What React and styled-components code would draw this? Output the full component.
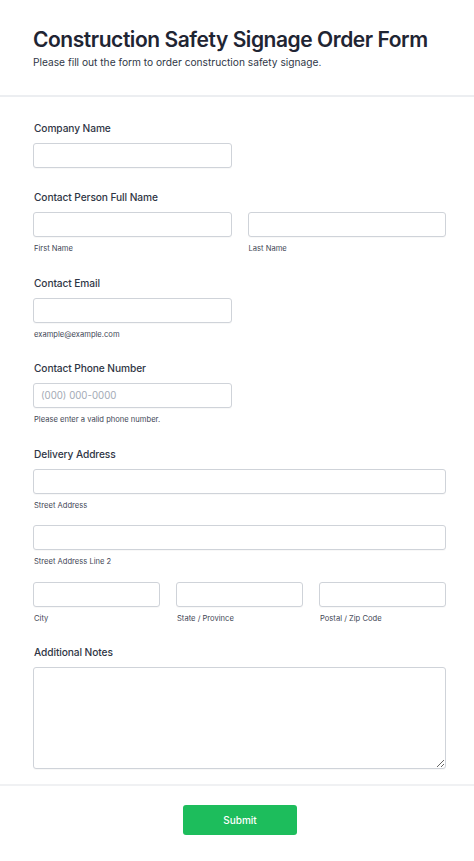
import React from 'react';
import styled, { createGlobalStyle } from 'styled-components';

const GlobalStyle = createGlobalStyle`
  * { box-sizing: border-box; }
  body {
    margin: 0;
    background: #fff;
    font-family: Inter, "Noto Sans", Arial, sans-serif;
    color: #1f2937;
  }
`;

const App = () => {
  return (
    <Page>
      <GlobalStyle />
      <Header>
        <Title>Construction Safety Signage Order Form</Title>
        <Subtitle>Please fill out the form to order construction safety signage.</Subtitle>
      </Header>

      <FormBody>
        <Field>
          <Label>Company Name</Label>
          <Row cols={2}>
            <Input type="text" />
          </Row>
        </Field>

        <Field hasSub>
          <Label>Contact Person Full Name</Label>
          <Row cols={2}>
            <Cell>
              <Input type="text" />
              <SubLabel>First Name</SubLabel>
            </Cell>
            <Cell>
              <Input type="text" />
              <SubLabel>Last Name</SubLabel>
            </Cell>
          </Row>
        </Field>

        <Field hasSub>
          <Label>Contact Email</Label>
          <Row cols={2}>
            <Cell>
              <Input type="email" />
              <SubLabel>example@example.com</SubLabel>
            </Cell>
          </Row>
        </Field>

        <Field hasSub>
          <Label>Contact Phone Number</Label>
          <Row cols={2}>
            <Cell>
              <Input type="tel" placeholder="(000) 000-0000" />
              <SubLabel>Please enter a valid phone number.</SubLabel>
            </Cell>
          </Row>
        </Field>

        <Field hasSub>
          <Label>Delivery Address</Label>
          <AddressStack>
            <Cell>
              <Input type="text" />
              <SubLabel>Street Address</SubLabel>
            </Cell>
            <Cell>
              <Input type="text" />
              <SubLabel>Street Address Line 2</SubLabel>
            </Cell>
            <Row cols={3}>
              <Cell>
                <Input type="text" />
                <SubLabel>City</SubLabel>
              </Cell>
              <Cell>
                <Input type="text" />
                <SubLabel>State / Province</SubLabel>
              </Cell>
              <Cell>
                <Input type="text" />
                <SubLabel>Postal / Zip Code</SubLabel>
              </Cell>
            </Row>
          </AddressStack>
        </Field>

        <Field last>
          <Label>Additional Notes</Label>
          <TextArea />
        </Field>
      </FormBody>

      <Footer>
        <SubmitButton type="button">Submit</SubmitButton>
      </Footer>
    </Page>
  );
};

const Page = styled.div`
  width: 474px;
  min-height: 861px;
  background: #fff;
`;

const Header = styled.header`
  padding: 26px 28px 25px 33px;
  border-bottom: 2px solid #eceef1;
`;

const Title = styled.h1`
  margin: 0;
  font-size: 21px;
  line-height: 28px;
  font-weight: 600;
  letter-spacing: -0.45px;
  color: #1f2533;
  white-space: nowrap;
`;

const Subtitle = styled.p`
  margin: 0;
  font-size: 10.2px;
  line-height: 16px;
  color: #2f3747;
`;

const FormBody = styled.main`
  padding: 23px 28px 15px 33px;
  border-bottom: 2px solid #f0f1f3;
`;

const Field = styled.div`
  display: flex;
  flex-direction: column;
  margin-bottom: ${p => (p.last ? '0' : p.hasSub ? '19.5px' : '21px')};
`;

const Label = styled.label`
  display: block;
  padding-left: 1px;
  font-size: 10.2px;
  line-height: 16px;
  font-weight: 500;
  letter-spacing: -0.1px;
  color: #2f3645;
  margin-bottom: 7px;
`;

const Row = styled.div`
  display: grid;
  grid-template-columns: repeat(${p => p.cols}, 1fr);
  column-gap: 16px;
`;

const Cell = styled.div`
  display: flex;
  flex-direction: column;
`;

const AddressStack = styled.div`
  display: flex;
  flex-direction: column;
  gap: 13.5px;
`;

const Input = styled.input`
  width: 100%;
  height: 25px;
  padding: 0 7px;
  border: 1px solid #cfd3d9;
  border-radius: 3px;
  background: #fff;
  font-family: inherit;
  font-size: 9.7px;
  color: #1f2937;
  box-shadow: 0 1px 1px rgba(0, 0, 0, 0.03);
  outline: none;

  &::placeholder {
    color: #a3aab5;
  }
`;

const SubLabel = styled.span`
  display: block;
  margin-top: 6px;
  padding-left: 1px;
  font-size: 7.6px;
  line-height: 12px;
  color: #3f4756;
`;

const TextArea = styled.textarea`
  width: 100%;
  height: 102px;
  padding: 6px 7px;
  border: 1px solid #cfd3d9;
  border-radius: 3px;
  font-family: inherit;
  font-size: 9.7px;
  outline: none;
  resize: vertical;
  box-shadow: 0 1px 1px rgba(0, 0, 0, 0.03);
  display: block;
`;

const Footer = styled.footer`
  display: flex;
  justify-content: center;
  padding: 19px 0 26px 6px;
`;

const SubmitButton = styled.button`
  width: 114px;
  height: 30px;
  border: none;
  border-radius: 3px;
  background: #1dbd5c;
  color: #fff;
  font-family: inherit;
  font-size: 10px;
  font-weight: 500;
  cursor: pointer;
`;

export default App;
